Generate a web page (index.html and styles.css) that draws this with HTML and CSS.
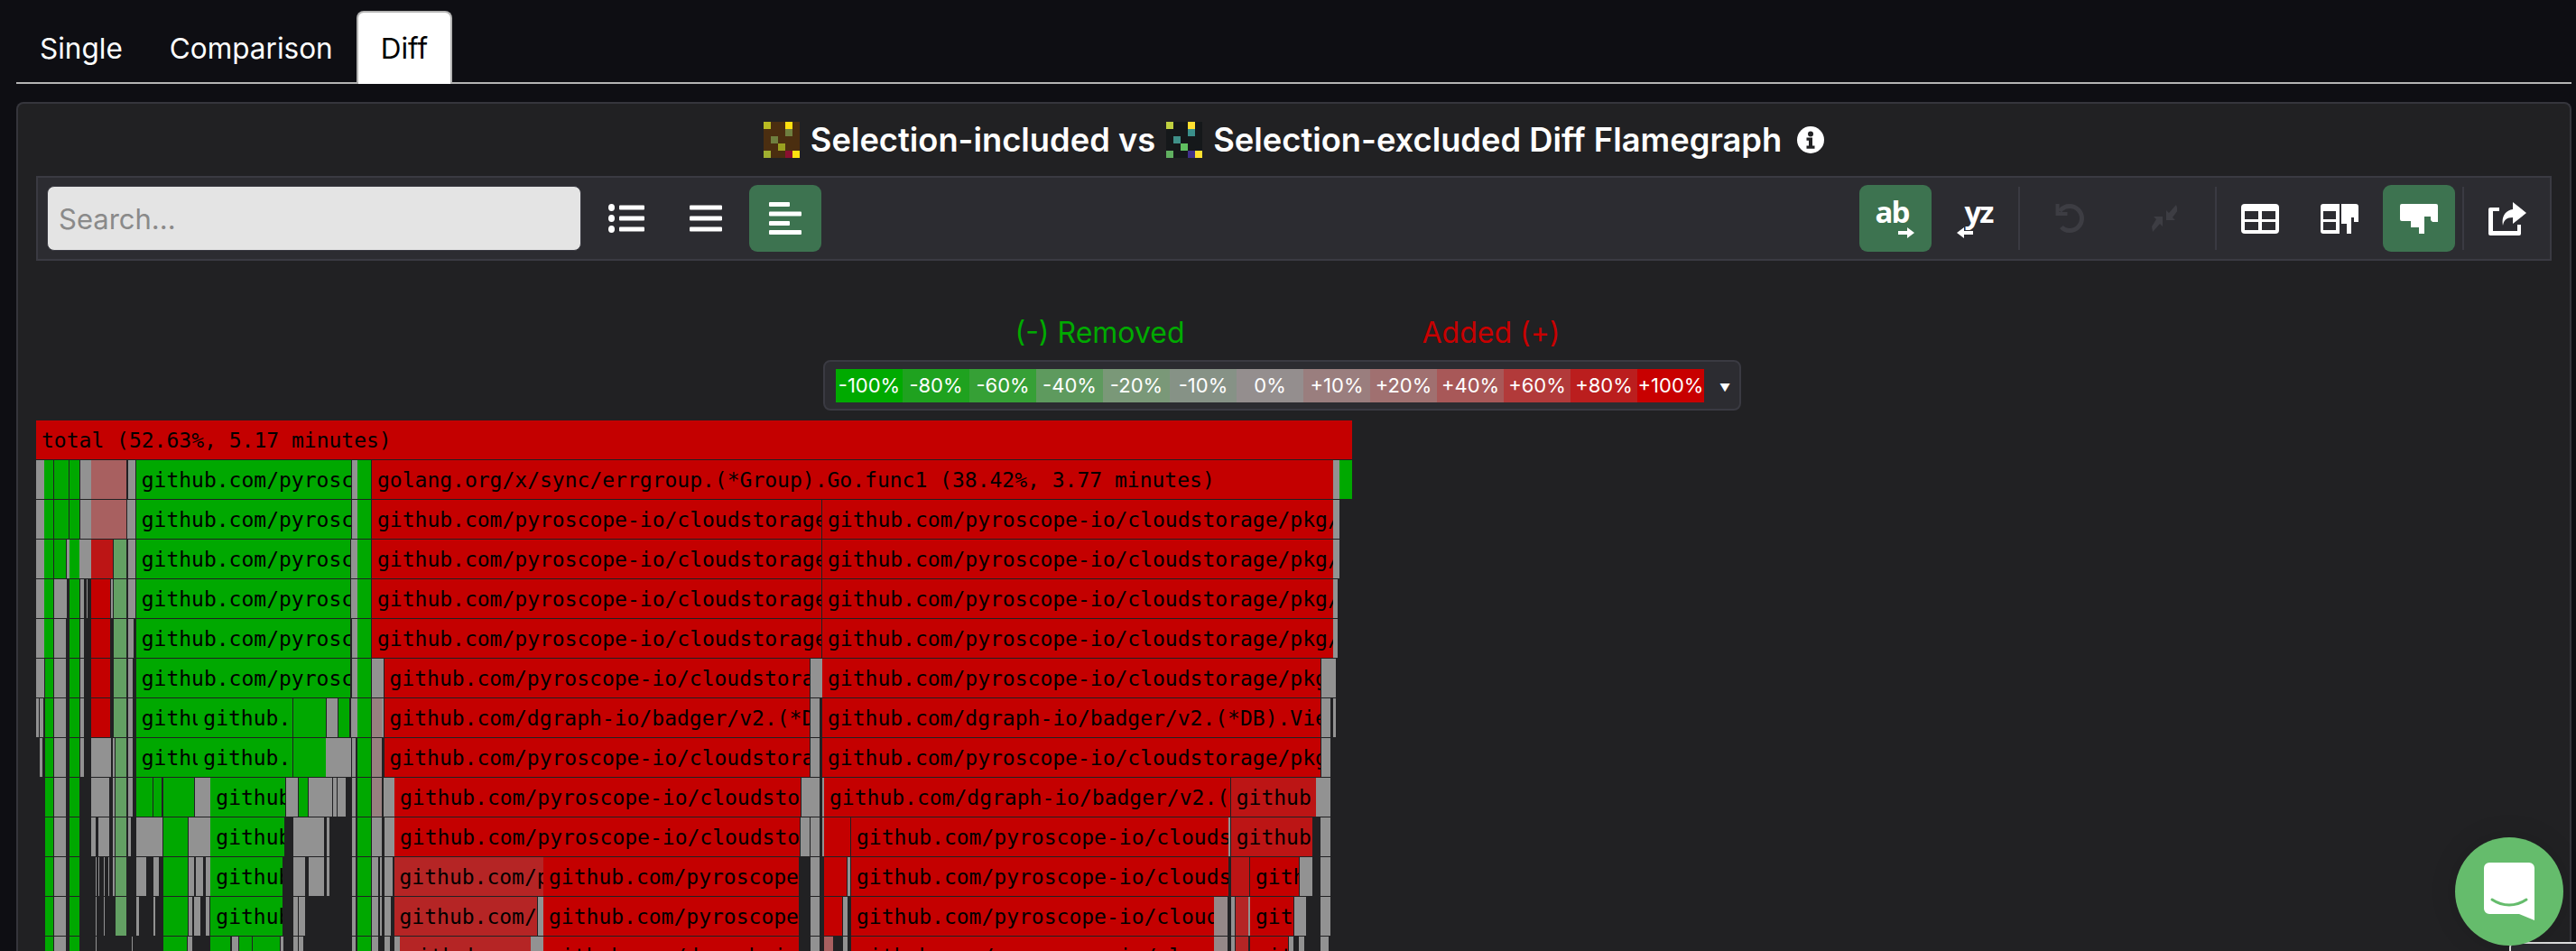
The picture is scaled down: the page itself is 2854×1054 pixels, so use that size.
FILE: index.html
```html
<!DOCTYPE html>
<html lang="en">
<head>
<meta charset="utf-8">
<title>Diff Flamegraph</title>
<link rel="stylesheet" href="styles.css">
</head>
<body>
<nav class="tabs">
  <a class="tab">Single</a>
  <a class="tab">Comparison</a>
  <a class="tab tab-active">Diff</a>
</nav>
<main class="panel">
  <h2 class="title">
    <svg class="identicon" viewBox="0 0 5 5"><rect width="5" height="5" fill="#4b2e10"/><rect x="0" y="0" width="1" height="1" fill="#b9bb22"/><rect x="3" y="0" width="1" height="1" fill="#ffe010"/><rect x="3" y="1" width="1" height="1" fill="#6f7f3f"/><rect x="1" y="2" width="1" height="1" fill="#6f7f3f"/><rect x="2" y="3" width="1" height="1" fill="#9aa020"/><rect x="0" y="4" width="1" height="1" fill="#a0b030"/><rect x="3" y="4" width="1" height="1" fill="#8a1030"/><rect x="4" y="4" width="1" height="1" fill="#ffe010"/></svg>
    <span class="title-text">Selection-included vs</span>
    <svg class="identicon" viewBox="0 0 5 5"><rect width="5" height="5" fill="#15181a"/><rect x="0" y="0" width="1" height="1" fill="#c0d040"/><rect x="3" y="0" width="1" height="1" fill="#ffe030"/><rect x="3" y="1" width="1" height="1" fill="#3a8f8a"/><rect x="1" y="2" width="1" height="1" fill="#3f9088"/><rect x="2" y="3" width="1" height="1" fill="#60c060"/><rect x="0" y="4" width="1" height="1" fill="#60b060"/><rect x="3" y="4" width="1" height="1" fill="#40308a"/><rect x="4" y="4" width="1" height="1" fill="#ffe030"/></svg>
    <span class="title-text">Selection-excluded Diff Flamegraph</span>
    <svg class="info" viewBox="0 0 30 30"><circle cx="15" cy="15" r="15" fill="#fff"/><circle cx="15" cy="8.5" r="3" fill="#212123"/><path d="M10.5 12.5h6.5v9h2.5v3.2h-9v-3.2h2.5v-5.8h-2.500z" fill="#212123"/></svg>
  </h2>

  <div class="toolbar">
    <div class="tool-group">
      <input class="search" type="text" placeholder="Search...">
      <button class="btn"><svg width="40" height="32" viewBox="0 0 40 32" fill="#fff"><ellipse cx="3.500" cy="4" rx="3.500" ry="4"/><ellipse cx="3.500" cy="16" rx="3.500" ry="4"/><ellipse cx="3.500" cy="28" rx="3.500" ry="4"/><rect x="12" y="1.500" width="28" height="5" rx="1"/><rect x="12" y="13.500" width="28" height="5" rx="1"/><rect x="12" y="25.500" width="28" height="5" rx="1"/></svg></button>
      <button class="btn"><svg width="36" height="32" viewBox="0 0 36 32" fill="#fff"><rect y="1.500" width="36" height="5" rx="1"/><rect y="13.500" width="36" height="5" rx="1"/><rect y="25.500" width="36" height="5" rx="1"/></svg></button>
      <button class="btn btn-on"><svg width="36" height="36" viewBox="0 0 36 36" fill="#fff"><rect width="23" height="5" rx="1"/><rect y="10.500" width="36" height="5" rx="1"/><rect y="21" width="23" height="5" rx="1"/><rect y="31" width="36" height="5" rx="1"/></svg></button>
    </div>
    <div class="tool-group">
      <button class="btn btn-on sort"><span class="sort-text">ab</span><svg class="sort-arrow" width="18" height="12" viewBox="0 0 18 12" fill="#fff"><path d="M0 4h10V0l8 6-8 6V8H0z"/></svg></button>
      <button class="btn sort sort-desc"><span class="sort-text">yz</span><svg class="sort-arrow" width="18" height="12" viewBox="0 0 18 12" fill="#fff"><path d="M18 4H8V0L0 6l8 6V8h10z"/></svg></button>
      <span class="divider"></span>
      <button class="btn btn-wide"><svg width="34" height="32" viewBox="0 0 34 32" fill="none" stroke="#3d3d43" stroke-width="5"><path d="M5 8c3-4 7-5.500 11-5.500 7.500 0 13.500 6 13.500 13.500S23.500 29.500 16 29.500c-4 0-7-1.500-9-4"/><path d="M2.500 0v11h11" stroke-width="4"/></svg></button>
      <button class="btn btn-wide"><svg width="28" height="30" viewBox="0 0 28 30" fill="#3d3d43"><path d="M27 0l-8 9-3-3v11h10l-3-3 6-8z"/><path d="M1 30l8-9 3 3V13H2l3 3-5 8z"/></svg></button>
      <span class="divider"></span>
      <button class="btn"><svg width="42" height="33" viewBox="0 0 42 33"><rect width="42" height="33" rx="4" fill="#fff"/><g fill="#2c2c31"><rect x="4" y="8" width="15" height="9"/><rect x="23" y="8" width="15" height="9"/><rect x="4" y="20" width="15" height="9"/><rect x="23" y="20" width="15" height="9"/></g></svg></button>
      <button class="btn"><svg width="42" height="33" viewBox="0 0 42 33"><path d="M3 0h18v33H3a3 3 0 0 1-3-3V3a3 3 0 0 1 3-3z" fill="#fff"/><g fill="#2c2c31"><rect x="3" y="8" width="14" height="9"/><rect x="3" y="20" width="14" height="9"/></g><path d="M23 0h16a3 3 0 0 1 3 3v17h-5v-5h-3v18h-5V22h-6z" fill="#fff"/></svg></button>
      <button class="btn btn-on"><svg width="42" height="33" viewBox="0 0 42 33" fill="#fff"><path d="M2 0h38a2 2 0 0 1 2 2v18h-6l-2-2v-4h-7v19h-6v-7h-9v-7H2a2 2 0 0 1-2-2V2a2 2 0 0 1 2-2z"/></svg></button>
      <span class="divider"></span>
      <button class="btn"><svg width="42" height="37" viewBox="0 0 42 37" fill="#fff"><path d="M2 6h10v4H5v22h27v-7h4v10a2 2 0 0 1-2 2H2a2 2 0 0 1-2-2V8a2 2 0 0 1 2-2z"/><path d="M27 0l15 12-15 12v-7c-7 0-10 3-11 9-2-10 3-17 11-18z"/></svg></button>
    </div>
  </div>

  <div class="legend-labels">
    <span class="label-removed">(-) Removed</span>
    <span class="label-added">Added (+)</span>
  </div>
  <div class="legend">
    <div class="legend-cells">
      <span class="cell c-100n">-100%</span>
      <span class="cell c-80n">-80%</span>
      <span class="cell c-60n">-60%</span>
      <span class="cell c-40n">-40%</span>
      <span class="cell c-20n">-20%</span>
      <span class="cell c-10n">-10%</span>
      <span class="cell c-0">0%</span>
      <span class="cell c-10p">+10%</span>
      <span class="cell c-20p">+20%</span>
      <span class="cell c-40p">+40%</span>
      <span class="cell c-60p">+60%</span>
      <span class="cell c-80p">+80%</span>
      <span class="cell c-100p">+100%</span>
    </div>
    <span class="legend-caret">▼</span>
  </div>

  <div class="flame" id="flame"></div>
</main>

<div class="corner-box"></div>
<div class="chat">
  <svg width="56" height="64" viewBox="0 0 56 64"><path d="M6 0h44a6 6 0 0 1 6 6v58l-17-7H6a6 6 0 0 1-6-6V6a6 6 0 0 1 6-6z" fill="#fff"/><path d="M9 41c12 8 26 8 38 0" fill="none" stroke="#65bc6c" stroke-width="3" stroke-linecap="round"/></svg>
</div>
<script src="flame.js"></script>
</body>
</html>
```
FILE: styles.css
```css
* { box-sizing: border-box; }
html, body { margin: 0; height: 1054px; overflow: hidden; }
body {
  background: #0e0e13;
  color: #fff;
  font-family: Inter, "Liberation Sans", sans-serif;
}

.tabs {
  display: flex;
  height: 93px;
  margin: 0 5px 0 18px;
  padding: 12px 0 0 0;
  border-bottom: 2px solid #b4b4b4;
}
.tab {
  height: 81px;
  padding: 0 26px;
  font-size: 31.5px;
  line-height: 84px;
  color: #fff;
}
.tab-active {
  background: #fff;
  color: #000;
  border: 2px solid #b4b4b4;
  border-bottom: 0;
  border-radius: 8px 8px 0 0;
  padding: 0 25px;
  line-height: 80px;
}

.panel {
  height: 941px;
  margin: 20px 5px 0 18px;
  padding: 0 20px;
  background: #212123;
  border: 2px solid #35353c;
  border-bottom: 0;
  border-radius: 8px 8px 0 0;
}

.title {
  display: flex;
  align-items: center;
  justify-content: center;
  height: 80px;
  margin: 0;
  font-size: 36.3px;
  font-weight: 600;
  padding-top: 0;
}
.identicon { width: 40px; height: 40px; margin: 0 12px 0 0; flex: none; shape-rendering: crispEdges; }
.title-text { margin-right: 12px; }
.info { width: 30px; height: 30px; margin-left: 5px; flex: none; }

.toolbar {
  display: flex;
  align-items: center;
  justify-content: space-between;
  height: 94px;
  padding: 0 7px 0 10px;
  background: #2c2c31;
  border: 2px solid #3a3a42;
}
.tool-group { display: flex; align-items: center; gap: 8px; }
.search {
  width: 592px;
  height: 72px;
  margin-right: 2px;
  padding: 0 12px;
  background: #e4e4e4;
  border: 1px solid #3a3a42;
  border-radius: 8px;
  font: 31px Inter, "Liberation Sans", sans-serif;
  color: #222;
}
.search::placeholder { color: #8a8a8a; opacity: 1; }
.btn {
  display: flex;
  align-items: center;
  justify-content: center;
  width: 80px;
  height: 74px;
  padding: 0;
  background: transparent;
  border: 0;
  border-radius: 9px;
}
.btn-on { background: #3d7350; }
.btn-wide { width: 96px; }
.divider { width: 2px; height: 70px; background: #3a3a42; }

.sort { flex-direction: column; color: #fff; }
.sort-text {
  margin-right: 8px;
  font: 700 33px/28px "Open Sans", Inter, sans-serif;
  letter-spacing: -2px;
  color: #fff;
}
.sort-arrow { align-self: flex-end; margin: 3px 19px 0 0; }
.sort-desc .sort-text { margin: 0 0 2px 8px; }
.sort-desc .sort-arrow { align-self: flex-start; margin: 1px 0 0 20px; }

.legend-labels {
  display: flex;
  justify-content: center;
  gap: 263px;
  height: 36px;
  margin-top: 62px;
  padding-right: 14px;
  font-size: 32px;
  line-height: 36px;
}
.label-removed { color: #00aa00; }
.label-added { color: #c80000; }

.legend {
  display: flex;
  align-items: center;
  width: 1017px;
  height: 56px;
  margin: 12px 0 0 872px;
  padding-left: 12px;
  background: #2c2c31;
  border: 2px solid #3a3a42;
  border-radius: 8px;
}
.legend-cells { display: flex; }
.cell {
  width: 74px;
  height: 37px;
  font-size: 22px;
  line-height: 37px;
  text-align: center;
  white-space: nowrap;
}
.c-100n { background: #00aa00; }
.c-80n { background: #1fa21f; }
.c-60n { background: #36a036; }
.c-40n { background: #5e9a5e; }
.c-20n { background: #7a9878; }
.c-10n { background: #869286; }
.c-0 { background: #948e8e; }
.c-10p { background: #9a7e7e; }
.c-20p { background: #a07070; }
.c-40p { background: #a85858; }
.c-60p { background: #b23a3a; }
.c-80p { background: #bb1e1e; }
.c-100p { background: #c80000; }
.legend-caret { margin: 5px 0 0 17px; font-size: 12px; line-height: 1; }

.flame { margin-top: 11px; width: 1458px; }
.row { position: relative; height: 44px; }
.node {
  position: absolute;
  top: 0;
  height: 43px;
  padding-left: 6px;
  overflow: hidden;
  white-space: nowrap;
  color: #000;
  font: 23px/45px "DejaVu Sans Mono", monospace;
}
.n-r { background: #c40000; }
.n-g { background: #00a800; }
.n-a { background: #929292; }
.n-m { background: #63a063; }
.n-l { background: #a86060; }
.n-d { background: #bc1515; }
.n-e { background: #b52525; }
.n-p { background: #988080; }
.n-w { background: #958888; }

.corner-box {
  position: fixed;
  left: 2780px;
  top: 1044px;
  width: 80px;
  height: 30px;
  background: #2c2c31;
  border: 2px solid #ddd;
  border-radius: 6px;
}
.chat {
  position: fixed;
  left: 2720px;
  top: 928px;
  display: flex;
  align-items: flex-start;
  justify-content: center;
  width: 120px;
  height: 120px;
  padding-top: 28px;
  background: #65bc6c;
  border-radius: 50%;
  box-shadow: 0 0 30px rgba(0, 0, 0, .12);
}
```
FILE: flame.js
```js
var P = "github.com/pyroscope-io/cloudstorage/pkg/storage/segment",
    D = "github.com/dgraph-io/badger/v2.(*DB).View.func1";
var rows = [
 [[40,1498,"r","total (52.63%, 5.17 minutes)"]],
 [[40,49,"a"],[49.3,59.3,"g"],[60,76,"g"],[76.7,88.3,"g"],[89,101,"a"],[101.3,140.3,"l"],[141.7,150,"a"],[150.7,389.3,"g",P],[390,396,"a"],[396,411.3,"g"],[412,1476.7,"r","golang.org/x/sync/errgroup.(*Group).Go.func1 (38.42%, 3.77 minutes)"],[1477,1484,"a"],[1484,1498,"g"]],
 [[40,49,"a"],[49.3,59.3,"g"],[60,76,"g"],[76.7,88.3,"g"],[89,101,"a"],[101.3,140.3,"l"],[141,150,"a"],[150.7,389.3,"g",P],[390,396,"a"],[396,411.3,"g"],[412,910.2,"r",P],[911,1476.7,"r",P],[1477,1484,"a"]],
 [[40,49,"a"],[49.3,59.3,"g"],[60,73.3,"g"],[74,76.7,"a"],[76.7,87.7,"g"],[88.3,101,"a"],[101.3,124.7,"d"],[125.7,140.3,"m"],[141.7,150,"a"],[150.7,388.3,"g",P],[389.3,396,"a"],[396,411.3,"g"],[412,910.2,"r",P],[911,1476.7,"r",P],[1477,1484,"a"]],
 [[40,49,"a"],[49.3,59.3,"g"],[60,74,"a"],[76.7,87.7,"g"],[89,93.3,"a"],[96,96.7,"a"],[101.3,122,"r"],[122.7,125.3,"a"],[125.7,140.3,"m"],[141.7,150,"a"],[150.7,388.3,"g",P],[389.3,396,"a"],[396,411.3,"g"],[412,910.2,"r",P],[911,1476.7,"r",P],[1477,1481.5,"a"]],
 [[40,49,"a"],[49.3,59.3,"g"],[60,73.3,"a"],[76.7,87.7,"g"],[89,93.3,"a"],[101.3,122,"r"],[125.7,140.3,"m"],[141.7,148,"a"],[150.7,388.3,"g",P],[390,396,"a"],[396,411.3,"g"],[412,910.2,"r",P],[911,1476.7,"r",P],[1477,1481.5,"a"]],
 [[40,49,"a"],[50,59.3,"g"],[60,73.3,"a"],[76.7,87.7,"g"],[89,93.3,"a"],[101.3,122,"r"],[125.7,140.3,"m"],[141.7,146.7,"a"],[150.7,388.3,"g",P],[390,396,"a"],[396,411.3,"g"],[412,425.3,"a"],[425.5,897.3,"r",P],[897.6,910.6,"a"],[911,1463,"r",P],[1463.6,1480,"a"]],
 [[40,43.3,"a"],[44.3,48.3,"a"],[50,59.3,"g"],[60,73.3,"a"],[76.7,87.7,"g"],[89,93.3,"a"],[101.3,122,"r"],[125.7,140.3,"m"],[141.7,146.7,"a"],[150.7,218.7,"g","github.com"],[219.3,324.3,"g","github.com"],[325,361.3,"g"],[362,374,"a"],[374.7,387.3,"g"],[388.7,396,"a"],[396,411.3,"g"],[412,422.7,"p"],[423.3,425.3,"a"],[425.5,897.3,"r",D.replace("View.func1","View")],[897.6,908,"a"],[911,1463,"r",D],[1463.6,1474,"a"],[1477,1480,"a"]],
 [[44,46.7,"a"],[50,59.3,"g"],[60,73.3,"a"],[76.7,87.7,"g"],[89,92.7,"a"],[101.3,122.7,"a"],[125.3,127.3,"a"],[128.3,140.3,"m"],[141.7,146.7,"a"],[150.7,218.7,"g","github.com"],[219.3,324.3,"g","github.com"],[325,360.7,"g"],[361.3,388.7,"a"],[390,394,"a"],[396,411.3,"g"],[412,422.7,"p"],[425.5,897.3,"r",P],[897.6,908,"a"],[911,1463,"r",P],[1463.6,1474,"a"]],
 [[50,59.3,"g"],[60,73.3,"a"],[76.7,87.7,"g"],[101.3,121.3,"a"],[125.3,127.3,"a"],[128.3,140.3,"m"],[141.7,146.7,"a"],[150.7,169.3,"g"],[170,179.3,"g"],[180.7,214.7,"g"],[215.7,233.3,"a"],[233.3,316,"g",P],[316.7,330.3,"a"],[331,341.3,"g"],[342,368,"a"],[369.3,372.7,"a"],[374,382.7,"a"],[390,394,"a"],[396,411.3,"g"],[412,422.7,"p"],[425,436.5,"a"],[437,887.3,"r",P],[888,908,"a"],[911,913,"a"],[913,1363,"r",D],[1363.7,1457.6,"d",P],[1457.6,1474,"a"]],
 [[50,59.3,"g"],[60,73.3,"a"],[76.7,87.7,"g"],[101.3,106,"a"],[108.7,121.3,"a"],[125.3,127.3,"a"],[128.3,140.3,"m"],[141.7,145,"a"],[150.7,180,"a"],[180.7,208,"g"],[208.7,233.3,"a"],[233.3,315,"g",P],[325.3,358.7,"a"],[362,365.3,"a"],[390,394,"a"],[396,411.3,"g"],[412,422.7,"a"],[426,436.5,"a"],[437,885.6,"r",P],[886.6,897,"a"],[897.6,908,"a"],[911,913,"a"],[913,942.4,"r"],[943,1361,"r",P],[1361,1363,"a"],[1363.7,1454,"d",P],[1463,1474,"a"]],
 [[50,59.3,"g"],[60,73.3,"a"],[76.7,87.7,"g"],[105.5,106,"a"],[108.7,109.3,"a"],[115,115.6,"a"],[120,120.6,"a"],[125.3,127.3,"a"],[128.3,140.3,"m"],[150.7,162,"a"],[170,176,"a"],[180.7,208,"g"],[208.7,215,"a"],[216.7,225,"a"],[228.3,233.3,"a"],[233.3,313.3,"g",P],[325.3,338,"a"],[342,358.7,"a"],[362,364.7,"a"],[390,394,"a"],[396,411.3,"g"],[412,418.7,"a"],[421.3,422.7,"a"],[426,435,"a"],[436.5,601.5,"e",P],[602,885,"r",P],[897.6,908,"a"],[913,938,"r"],[939,942.4,"a"],[943,1361,"r",P],[1363.7,1384,"d"],[1385,1439,"r",P],[1439.6,1454,"a"],[1463,1474,"a"]],
 [[50,59.3,"g"],[60,73.3,"a"],[76.7,87.7,"g"],[105.5,106,"a"],[115,115.6,"a"],[128.3,140.3,"m"],[150.7,154,"a"],[170,171.7,"a"],[180.7,208,"g"],[208.7,212.7,"a"],[215,222,"a"],[228.3,231.7,"a"],[233.3,313.3,"g",P],[325.3,330,"a"],[330.7,338,"a"],[390,394,"a"],[396,411.3,"g"],[412,418.7,"a"],[421.3,422.7,"a"],[426,433.3,"a"],[436.5,595,"e",P],[596,601.5,"a"],[602,885,"r",P],[897.6,908,"a"],[913,933,"r"],[934,939,"a"],[943,1344.5,"r",P],[1345,1360,"w"],[1363.7,1368.5,"a"],[1369,1382.5,"e"],[1383,1384.5,"a"],[1385,1433,"r",P],[1433.5,1447,"a"],[1463,1474,"a"]],
 [[50,59.3,"g"],[60,73.3,"a"],[76.7,87.7,"g"],[105.5,106,"a"],[146,147,"a"],[180.7,207.3,"g"],[207.7,212.7,"a"],[233.3,255.3,"g"],[256.7,264,"a"],[264.7,279.3,"g"],[280,310,"g"],[310.7,314,"a"],[325.3,330,"a"],[330.7,336,"a"],[390,394,"a"],[396,411.3,"g"],[412,418.7,"a"],[426,432,"a"],[436.5,443,"a"],[443,588,"e",P],[588,601.5,"a"],[602,885,"r",D],[897.6,908,"a"],[913,923,"l"],[934,939,"a"],[943,1344.5,"r",P],[1345,1360,"w"],[1363.7,1368.5,"a"],[1369,1382.5,"e"],[1385,1427,"r",P],[1427.5,1433,"a"],[1439,1445,"a"],[1463,1472,"a"]]
];
var flame = document.getElementById("flame");
rows.forEach(function (row) {
  var r = document.createElement("div");
  r.className = "row";
  row.forEach(function (s) {
    var n = document.createElement("div");
    n.className = "node n-" + s[2];
    n.style.left = (s[0] - 40) + "px";
    n.style.width = (s[1] - s[0]) + "px";
    if (s[3]) n.textContent = s[3];
    else n.style.paddingLeft = "0";
    r.appendChild(n);
  });
  flame.appendChild(r);
});
```
